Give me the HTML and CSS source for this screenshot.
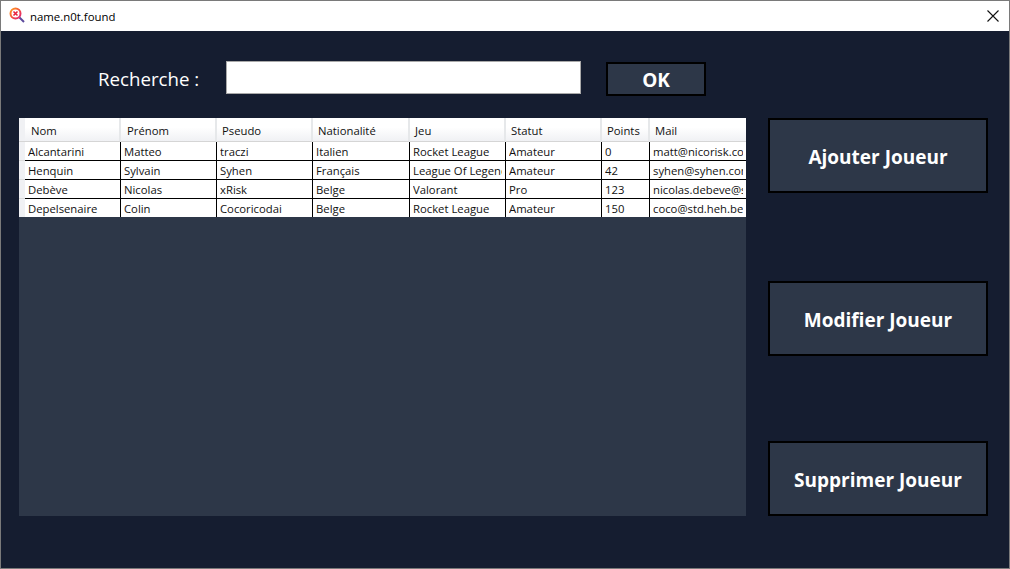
FILE: index.html
```html
<!DOCTYPE html>
<html lang="fr">
<head>
<meta charset="utf-8">
<title>name.n0t.found</title>
<link rel="stylesheet" href="styles.css">
</head>
<body>
<div class="window">
  <header class="titlebar">
    <svg class="app-icon" width="16" height="16" viewBox="0 0 16 16" fill="none">
      <defs>
        <linearGradient id="ring" x1="0" y1="0" x2="1" y2="1">
          <stop offset="0" stop-color="#ffa020"/>
          <stop offset="0.5" stop-color="#f4503c"/>
          <stop offset="1" stop-color="#e0207c"/>
        </linearGradient>
      </defs>
      <path d="M10.5 10.5 L15 15" stroke="#5b4a9c" stroke-width="2"/>
      <circle cx="6.5" cy="6.5" r="5" stroke="url(#ring)" stroke-width="2"/>
      <path d="M4.5 4.5 L8.5 8.5 M8.5 4.5 L4.5 8.5" stroke="#e8203c" stroke-width="1.6"/>
    </svg>
    <span class="app-title">name.n0t.found</span>
    <svg class="close" width="12" height="12" viewBox="0 0 12 12" fill="none">
      <path d="M0.5 0.5 L11.5 11.5 M11.5 0.5 L0.5 11.5" stroke="#111" stroke-width="1.1"/>
    </svg>
  </header>
  <main class="content">
    <div class="search">
      <label class="search-label">Recherche :</label>
      <div class="search-input"></div>
      <button class="ok">OK</button>
    </div>
    <div class="workspace">
      <section class="panel">
        <table class="grid">
          <colgroup>
            <col class="c-gutter"><col class="c-a"><col class="c-a"><col class="c-a"><col class="c-b"><col class="c-a"><col class="c-a"><col class="c-p"><col class="c-m">
          </colgroup>
          <thead>
            <tr><th class="g"></th><th class="wide-pad">Nom</th><th class="wide-pad">Prénom</th><th>Pseudo</th><th>Nationalité</th><th>Jeu</th><th>Statut</th><th>Points</th><th>Mail</th></tr>
          </thead>
          <tbody>
            <tr><td class="g"></td><td><div class="cell">Alcantarini</div></td><td><div class="cell">Matteo</div></td><td><div class="cell">traczi</div></td><td><div class="cell">Italien</div></td><td><div class="cell">Rocket League</div></td><td><div class="cell">Amateur</div></td><td><div class="cell">0</div></td><td><div class="cell">matt@nicorisk.com</div></td></tr>
            <tr><td class="g"></td><td><div class="cell">Henquin</div></td><td><div class="cell">Sylvain</div></td><td><div class="cell">Syhen</div></td><td><div class="cell">Français</div></td><td><div class="cell">League Of Legends</div></td><td><div class="cell">Amateur</div></td><td><div class="cell">42</div></td><td><div class="cell">syhen@syhen.com</div></td></tr>
            <tr><td class="g"></td><td><div class="cell">Debève</div></td><td><div class="cell">Nicolas</div></td><td><div class="cell">xRisk</div></td><td><div class="cell">Belge</div></td><td><div class="cell">Valorant</div></td><td><div class="cell">Pro</div></td><td><div class="cell">123</div></td><td><div class="cell">nicolas.debeve@std.heh.be</div></td></tr>
            <tr><td class="g"></td><td><div class="cell">Depelsenaire</div></td><td><div class="cell">Colin</div></td><td><div class="cell">Cocoricodai</div></td><td><div class="cell">Belge</div></td><td><div class="cell">Rocket League</div></td><td><div class="cell">Amateur</div></td><td><div class="cell">150</div></td><td><div class="cell">coco@std.heh.be</div></td></tr>
          </tbody>
        </table>
      </section>
      <aside class="actions">
        <button class="action">Ajouter Joueur</button>
        <button class="action action-middle">Modifier Joueur</button>
        <button class="action action-last">Supprimer Joueur</button>
      </aside>
    </div>
  </main>
</div>
</body>
</html>
```
FILE: styles.css
```css
* { box-sizing: border-box; }
html, body { margin: 0; padding: 0; }
body { width: 1010px; height: 569px; overflow: hidden; font-family: "Open Sans", "Noto Sans", "Liberation Sans", sans-serif; }
.window { width: 1010px; height: 569px; border: 1px solid #7a7a7a; display: flex; flex-direction: column; background: #151d30; }
.titlebar { height: 30px; flex: none; background: #fff; display: flex; align-items: center; padding-left: 8px; padding-right: 10px; }
.app-icon { flex: none; margin-top: -3px; }
.app-title { margin-left: 5px; font-size: 11.4px; color: #000; }
.close { margin-left: auto; }
.content { flex: 1; padding: 30px 21px 0 18px; display: flex; flex-direction: column; }
.search { display: flex; height: 35px; margin-bottom: 22px; padding-left: 79px; }
.search-label { width: 128px; height: 33px; line-height: 36px; font-size: 18.7px; color: #fff; }
.search-input { width: 355px; height: 33px; background: #fff; border: 1px solid #a9a9a9; }
.ok { width: 100px; height: 34px; margin: 1px 0 0 25px; background: #2d3748; border: 2px solid #000; color: #fff; font: 700 19px "Open Sans", sans-serif; padding: 2px 0 0; }
.workspace { display: flex; justify-content: space-between; height: 398px; }
.panel { width: 727px; height: 398px; background: #2d3748; }
.grid { width: 727px; table-layout: fixed; border-collapse: separate; border-spacing: 0; background: #fff; font-size: 11.3px; color: #111; }
.c-gutter { width: 6px; }
.c-a { width: 96px; }
.c-b { width: 97px; }
.c-p { width: 48px; }
.c-m { width: 96px; }
.grid th { height: 24px; padding: 2px 0 0 5px; font-weight: 400; text-align: left; border-right: 2px solid #e6e8ea; border-bottom: 1px solid #d5d5d5; background: linear-gradient(#fff 40%, #f0f1f4); overflow: hidden; white-space: nowrap; }
.grid th.wide-pad { padding-left: 6px; }
.grid th:last-child { border-right: 0; }
.grid td { height: 19px; padding: 0 0 0 3px; border-right: 1px solid #000; border-bottom: 1px solid #000; line-height: 17px; }
.cell { overflow: hidden; white-space: nowrap; margin-right: 3px; }
.grid td:last-child { border-right: 0; }
.grid tbody tr:last-child td { height: 18px; border-bottom: 0; }
.grid th.g { background: #f0f1f4; border-right: 0; padding: 0; }
.grid td.g { background: #f0f1f4; padding: 0; border-right: 0; border-bottom: 1px solid #dcdcdc; }
.actions { width: 220px; display: flex; flex-direction: column; }
.action { width: 220px; height: 75px; flex: none; background: #2d3748; border: 2px solid #000; color: #fff; font: 700 19px "Open Sans", sans-serif; padding: 2px 0 0; }
.action-middle { margin-top: 88px; }
.action-last { margin-top: 85px; }
```
